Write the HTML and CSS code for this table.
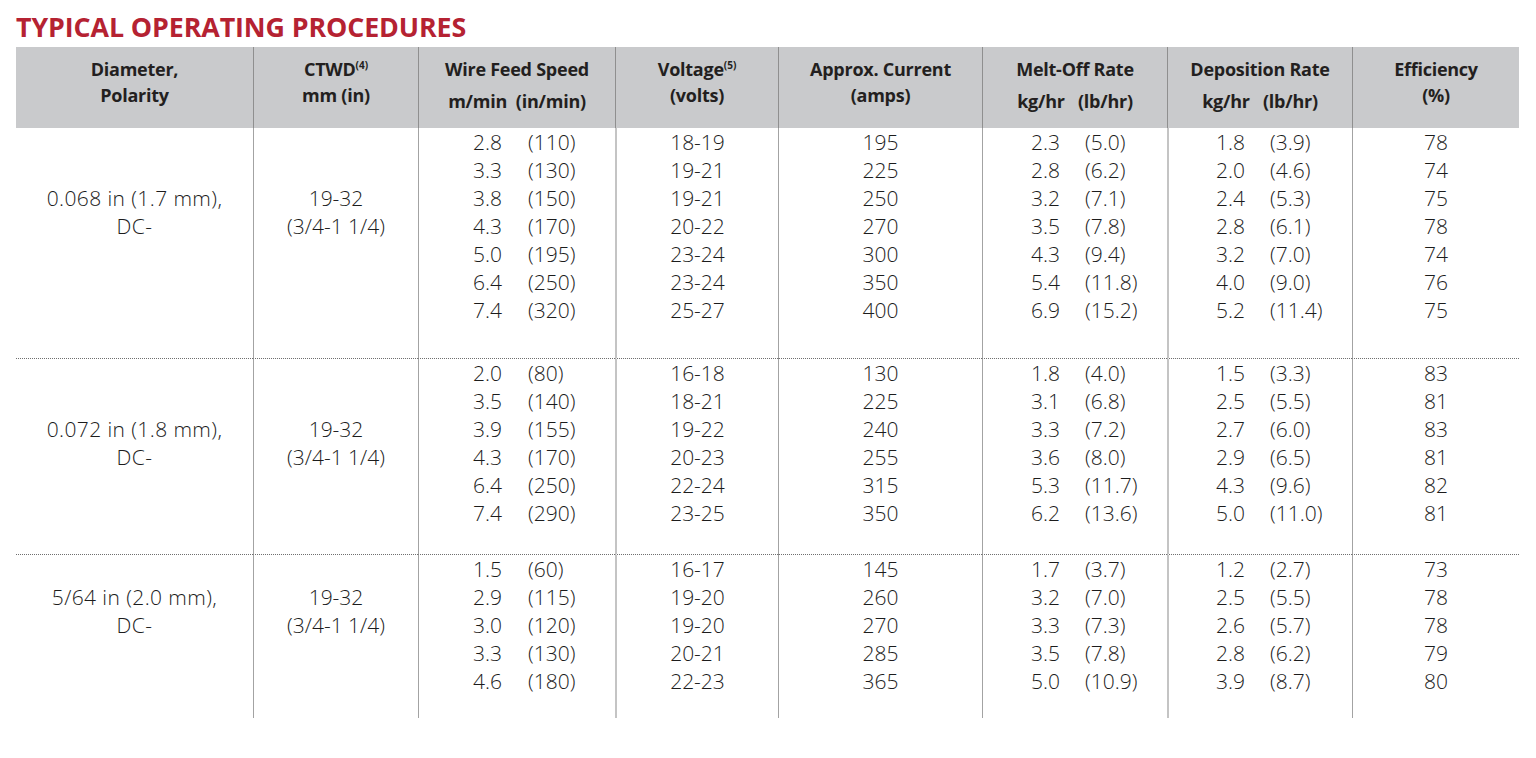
FILE: index.html
```html
<!DOCTYPE html>
<html>
<head>
<meta charset="utf-8">
<link rel="stylesheet" href="styles.css">
</head>
<body>
<h1 class="title">TYPICAL OPERATING PROCEDURES</h1>
<div class="table">
  <div class="th first"><div class="l">Diameter,</div><div class="l">Polarity</div></div>
  <div class="th"><div class="l">CTWD<span class="sup">(4)</span></div><div class="l">mm (in)</div></div>
  <div class="th"><div class="l">Wire Feed Speed</div><div class="l unit">m/min&nbsp; (in/min)</div></div>
  <div class="th"><div class="l">Voltage<span class="sup">(5)</span></div><div class="l">(volts)</div></div>
  <div class="th"><div class="l">Approx. Current</div><div class="l">(amps)</div></div>
  <div class="th"><div class="l">Melt-Off Rate</div><div class="l unit">kg/hr&nbsp;&nbsp; (lb/hr)</div></div>
  <div class="th"><div class="l">Deposition Rate</div><div class="l unit">kg/hr&nbsp;&nbsp; (lb/hr)</div></div>
  <div class="th"><div class="l">Efficiency</div><div class="l">(%)</div></div>

  <!-- group 1 -->
  <div class="td first c off2 wide"><div class="l">0.068 in (1.7 mm),</div><div class="l">DC-</div></div>
  <div class="td c off2"><div class="l">19-32</div><div class="l">(3/4-1 1/4)</div></div>
  <div class="td pair wfs">
    <div class="l"><span class="n">2.8</span><span>(110)</span></div>
    <div class="l"><span class="n">3.3</span><span>(130)</span></div>
    <div class="l"><span class="n">3.8</span><span>(150)</span></div>
    <div class="l"><span class="n">4.3</span><span>(170)</span></div>
    <div class="l"><span class="n">5.0</span><span>(195)</span></div>
    <div class="l"><span class="n">6.4</span><span>(250)</span></div>
    <div class="l"><span class="n">7.4</span><span>(320)</span></div>
  </div>
  <div class="td c light">
    <div class="l">18-19</div><div class="l">19-21</div><div class="l">19-21</div><div class="l">20-22</div><div class="l">23-24</div><div class="l">23-24</div><div class="l">25-27</div>
  </div>
  <div class="td c">
    <div class="l">195</div><div class="l">225</div><div class="l">250</div><div class="l">270</div><div class="l">300</div><div class="l">350</div><div class="l">400</div>
  </div>
  <div class="td pair rate">
    <div class="l"><span class="n">2.3</span><span>(5.0)</span></div>
    <div class="l"><span class="n">2.8</span><span>(6.2)</span></div>
    <div class="l"><span class="n">3.2</span><span>(7.1)</span></div>
    <div class="l"><span class="n">3.5</span><span>(7.8)</span></div>
    <div class="l"><span class="n">4.3</span><span>(9.4)</span></div>
    <div class="l"><span class="n">5.4</span><span>(11.8)</span></div>
    <div class="l"><span class="n">6.9</span><span>(15.2)</span></div>
  </div>
  <div class="td pair rate light">
    <div class="l"><span class="n">1.8</span><span>(3.9)</span></div>
    <div class="l"><span class="n">2.0</span><span>(4.6)</span></div>
    <div class="l"><span class="n">2.4</span><span>(5.3)</span></div>
    <div class="l"><span class="n">2.8</span><span>(6.1)</span></div>
    <div class="l"><span class="n">3.2</span><span>(7.0)</span></div>
    <div class="l"><span class="n">4.0</span><span>(9.0)</span></div>
    <div class="l"><span class="n">5.2</span><span>(11.4)</span></div>
  </div>
  <div class="td c">
    <div class="l">78</div><div class="l">74</div><div class="l">75</div><div class="l">78</div><div class="l">74</div><div class="l">76</div><div class="l">75</div>
  </div>

  <!-- group 2 -->
  <div class="td sep first c off2 wide"><div class="l">0.072 in (1.8 mm),</div><div class="l">DC-</div></div>
  <div class="td sep c off2"><div class="l">19-32</div><div class="l">(3/4-1 1/4)</div></div>
  <div class="td sep pair wfs">
    <div class="l"><span class="n">2.0</span><span>(80)</span></div>
    <div class="l"><span class="n">3.5</span><span>(140)</span></div>
    <div class="l"><span class="n">3.9</span><span>(155)</span></div>
    <div class="l"><span class="n">4.3</span><span>(170)</span></div>
    <div class="l"><span class="n">6.4</span><span>(250)</span></div>
    <div class="l"><span class="n">7.4</span><span>(290)</span></div>
  </div>
  <div class="td sep c light">
    <div class="l">16-18</div><div class="l">18-21</div><div class="l">19-22</div><div class="l">20-23</div><div class="l">22-24</div><div class="l">23-25</div>
  </div>
  <div class="td sep c">
    <div class="l">130</div><div class="l">225</div><div class="l">240</div><div class="l">255</div><div class="l">315</div><div class="l">350</div>
  </div>
  <div class="td sep pair rate">
    <div class="l"><span class="n">1.8</span><span>(4.0)</span></div>
    <div class="l"><span class="n">3.1</span><span>(6.8)</span></div>
    <div class="l"><span class="n">3.3</span><span>(7.2)</span></div>
    <div class="l"><span class="n">3.6</span><span>(8.0)</span></div>
    <div class="l"><span class="n">5.3</span><span>(11.7)</span></div>
    <div class="l"><span class="n">6.2</span><span>(13.6)</span></div>
  </div>
  <div class="td sep pair rate light">
    <div class="l"><span class="n">1.5</span><span>(3.3)</span></div>
    <div class="l"><span class="n">2.5</span><span>(5.5)</span></div>
    <div class="l"><span class="n">2.7</span><span>(6.0)</span></div>
    <div class="l"><span class="n">2.9</span><span>(6.5)</span></div>
    <div class="l"><span class="n">4.3</span><span>(9.6)</span></div>
    <div class="l"><span class="n">5.0</span><span>(11.0)</span></div>
  </div>
  <div class="td sep c">
    <div class="l">83</div><div class="l">81</div><div class="l">83</div><div class="l">81</div><div class="l">82</div><div class="l">81</div>
  </div>

  <!-- group 3 -->
  <div class="td sep first c off1 wide"><div class="l">5/64 in (2.0 mm),</div><div class="l">DC-</div></div>
  <div class="td sep c off1"><div class="l">19-32</div><div class="l">(3/4-1 1/4)</div></div>
  <div class="td sep pair wfs">
    <div class="l"><span class="n">1.5</span><span>(60)</span></div>
    <div class="l"><span class="n">2.9</span><span>(115)</span></div>
    <div class="l"><span class="n">3.0</span><span>(120)</span></div>
    <div class="l"><span class="n">3.3</span><span>(130)</span></div>
    <div class="l"><span class="n">4.6</span><span>(180)</span></div>
  </div>
  <div class="td sep c light">
    <div class="l">16-17</div><div class="l">19-20</div><div class="l">19-20</div><div class="l">20-21</div><div class="l">22-23</div>
  </div>
  <div class="td sep c">
    <div class="l">145</div><div class="l">260</div><div class="l">270</div><div class="l">285</div><div class="l">365</div>
  </div>
  <div class="td sep pair rate">
    <div class="l"><span class="n">1.7</span><span>(3.7)</span></div>
    <div class="l"><span class="n">3.2</span><span>(7.0)</span></div>
    <div class="l"><span class="n">3.3</span><span>(7.3)</span></div>
    <div class="l"><span class="n">3.5</span><span>(7.8)</span></div>
    <div class="l"><span class="n">5.0</span><span>(10.9)</span></div>
  </div>
  <div class="td sep pair rate light">
    <div class="l"><span class="n">1.2</span><span>(2.7)</span></div>
    <div class="l"><span class="n">2.5</span><span>(5.5)</span></div>
    <div class="l"><span class="n">2.6</span><span>(5.7)</span></div>
    <div class="l"><span class="n">2.8</span><span>(6.2)</span></div>
    <div class="l"><span class="n">3.9</span><span>(8.7)</span></div>
  </div>
  <div class="td sep c">
    <div class="l">73</div><div class="l">78</div><div class="l">78</div><div class="l">79</div><div class="l">80</div>
  </div>
</div>
</body>
</html>
```

FILE: styles.css
```css
html, body {
  margin: 0;
  padding: 0;
  background: #ffffff;
}

body {
  width: 1536px;
  height: 758px;
  overflow: hidden;
  font-family: "Open Sans", "Noto Sans", "Liberation Sans", sans-serif;
}

.title {
  margin: 0;
  padding: 13px 16px 7px;
  font-size: 26.8px;
  line-height: 27px;
  font-weight: 700;
  color: #b52232;
  letter-spacing: -0.1px;
}

.table {
  margin-left: 16px;
  width: 1503px;
  display: grid;
  grid-template-columns: 237px 165px 197px 163px 204px 185px 185px 167px;
  grid-template-rows: 81px 230px 196px 164px;
}

.th {
  background: #c9cacc;
  border-left: 1px solid #8f8f8f;
  box-sizing: border-box;
  padding-top: 9px;
  text-align: center;
  font-size: 18px;
  line-height: 26px;
  font-weight: 700;
  color: #231f20;
  letter-spacing: -0.25px;
}

.th .unit {
  margin-top: 6px;
}

.sup {
  font-size: 10px;
  line-height: 0;
  vertical-align: 7px;
  letter-spacing: 0;
}

.first {
  border-left: none;
}

.td {
  border-left: 1px solid #a3a3a3;
  box-sizing: border-box;
  font-size: 21px;
  line-height: 28px;
  font-weight: 300;
  color: #1c1c1c;
  white-space: nowrap;
}

.td.first {
  border-left: none;
}

.td.wide {
  letter-spacing: 0.4px;
}

.td.light {
  border-left: 2px solid #c4c4c4;
}

.sep {
  border-top: 1px dotted #6f6f6f;
}

.c {
  text-align: center;
}

.off2 {
  padding-top: 56px;
}

.off1 {
  padding-top: 28px;
}

.pair .l {
  display: flex;
}

.pair .n {
  display: inline-block;
}

.wfs {
  padding-left: 54px;
}

.wfs .n {
  width: 55px;
}

.rate {
  padding-left: 48px;
}

.rate.light {
  padding-left: 47px;
}

.rate .n {
  width: 54px;
}
```
